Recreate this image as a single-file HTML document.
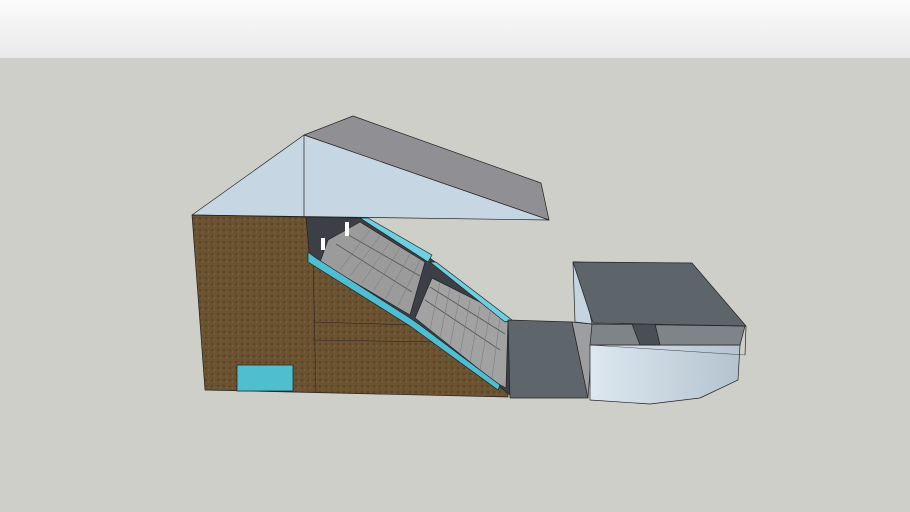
<!DOCTYPE html>
<html><head><style>
html,body{margin:0;padding:0;width:910px;height:512px;overflow:hidden;background:#cfcfca}
.hdr{position:absolute;left:0;top:0;width:910px;height:58px;background:linear-gradient(#fbfbfb,#e9e9e9)}
svg{position:absolute;left:0;top:0}
</style></head><body>
<div class="hdr"></div>
<svg width="910" height="512" viewBox="0 0 910 512">
<defs>
<pattern id="b" width="6" height="6" patternUnits="userSpaceOnUse">
<rect width="6" height="6" fill="#6b5230"/><rect x="1" y="1" width="2" height="2" fill="#5a4426"/><rect x="4" y="3" width="1" height="2" fill="#7a6040"/>
</pattern>
<linearGradient id="c" x1="0" x2="1"><stop offset="0" stop-color="#dde8f0"/><stop offset="1" stop-color="#b4c3cf"/></linearGradient>
</defs>
<g stroke="#222" stroke-width="0.7" stroke-linejoin="round">
<polygon points="304,135 353,116 541,183 549,220" fill="#909094"/>
<polygon points="192,215 304,135 549,220" fill="#c6d6e2"/>
<line x1="304" y1="135" x2="304" y2="217"/>
<polygon points="192,215 306,217 310,258 420,325 508,390 508,397 205,390" fill="url(#b)"/>
<line x1="313" y1="322" x2="415" y2="325" stroke-width="0.5"/>
<line x1="313" y1="340" x2="440" y2="342" stroke-width="0.5"/>
<line x1="313" y1="258" x2="316" y2="392" stroke-width="0.5"/>
<rect x="237" y="365" width="56" height="26" fill="#4fbfd0"/>
<polygon points="306,217 362,218 430,258 510,320 510,395 500,387 410,325 310,262" fill="#3c4046"/>
<polygon points="328,240 360,222 425,262 410,315 320,262" fill="#9b9b9b"/>
<polygon points="415,318 432,278 500,312 508,320 506,388 495,382" fill="#a2a2a2"/>
<polygon points="360,218 368,218 432,255 428,262" fill="#6ecfe0"/>
<polygon points="430,262 436,262 512,320 505,322" fill="#6ecfe0"/>
<polygon points="308,252 316,258 410,318 420,325 500,385 498,390 410,326 308,262" fill="#4ebfd2"/>
<g stroke="#555" stroke-width="0.8">
<line x1="336" y1="244" x2="412" y2="292"/>
<line x1="345" y1="233" x2="420" y2="276"/>
<line x1="425" y1="300" x2="500" y2="350"/>
<line x1="430" y1="287" x2="505" y2="334"/>
</g>
<g stroke="#777" stroke-width="0.5">
<line x1="440" y1="282" x2="430" y2="330"/><line x1="450" y1="288" x2="440" y2="338"/><line x1="460" y1="294" x2="450" y2="346"/><line x1="470" y1="300" x2="460" y2="354"/><line x1="480" y1="306" x2="470" y2="362"/><line x1="490" y1="312" x2="480" y2="370"/><line x1="500" y1="318" x2="492" y2="378"/>
<line x1="370" y1="230" x2="340" y2="270"/><line x1="380" y1="236" x2="350" y2="276"/><line x1="390" y1="242" x2="362" y2="283"/><line x1="400" y1="248" x2="374" y2="290"/><line x1="410" y1="254" x2="386" y2="298"/><line x1="420" y1="260" x2="398" y2="306"/>
</g>
<rect x="345" y="222" width="4" height="14" fill="#fff" stroke="none"/>
<rect x="321" y="238" width="4" height="12" fill="#fff" stroke="none"/>
<polygon points="508,320 572,322 588,398 510,398" fill="#5f666b"/>
<polygon points="572,322 592,324 592,345 588,398 580,360" fill="#9c9ea0"/>
<polygon points="573,262 580,262 592,324 575,322" fill="#c4d4e0"/>
<polygon points="590,345 740,345 738,380 700,398 650,404 590,400" fill="url(#c)"/>
<polygon points="592,324 745,326 740,345 590,345" fill="#7e8488"/>
<polygon points="632,324 655,324 660,345 640,345" fill="#4a4f53"/>
<polygon points="573,262 692,263 746,326 593,323" fill="#5e656a"/>
<line x1="746" y1="326" x2="745" y2="355"/>
<line x1="590" y1="345" x2="745" y2="355" stroke-width="0.4"/>
</g>
</svg>
</body></html>
